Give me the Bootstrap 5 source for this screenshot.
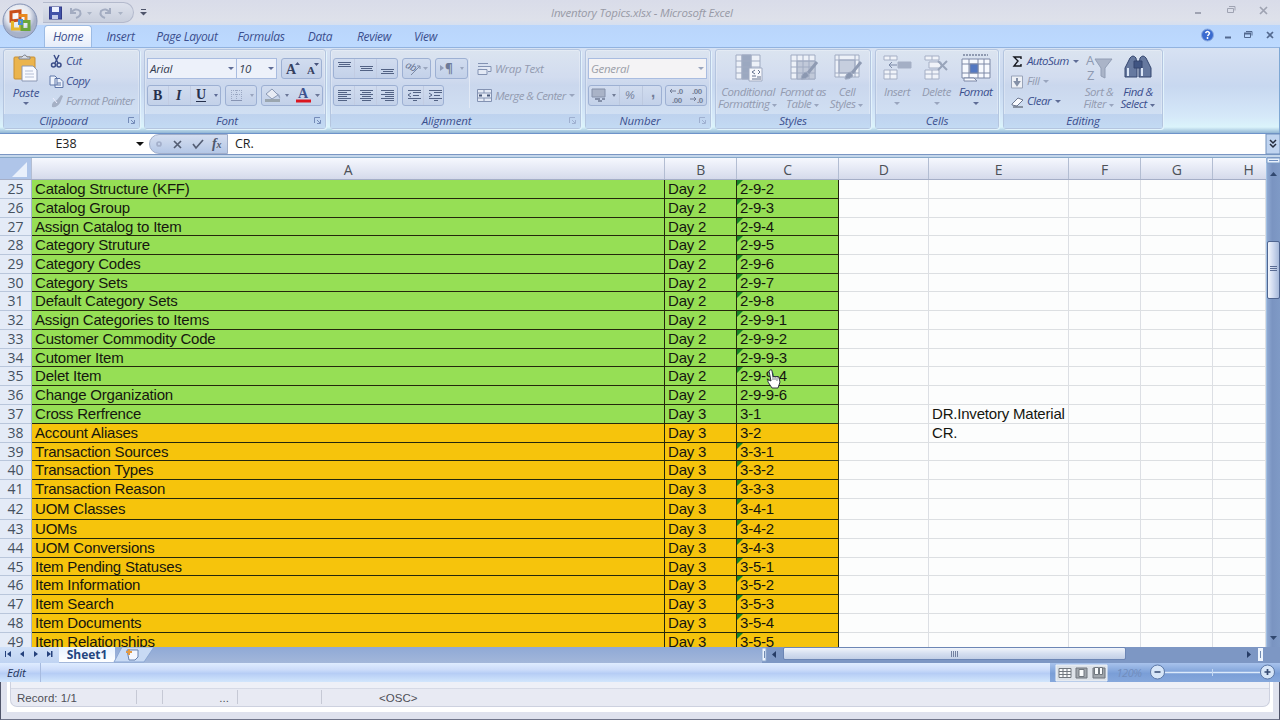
<!DOCTYPE html>
<html lang="en">
<head>
<meta charset="utf-8">
<title>Inventory Topics.xlsx - Microsoft Excel</title>
<link href="https://cdn.jsdelivr.net/npm/bootstrap@5.3.0/dist/css/bootstrap.min.css" rel="stylesheet">
<style>
:root{--ink:#3b4f8e;--dim:#939bb0}
body{width:1280px;height:720px;overflow:hidden;background:#e8eaf3;font-family:"Open Sans","Noto Sans",sans-serif;font-size:11.5px;line-height:12px;color:var(--ink);font-style:italic;letter-spacing:-.45px}
svg{display:block;flex:none;overflow:visible}
span,div{white-space:nowrap}
.dim{color:var(--dim)}
.titlebar{height:25px;background:linear-gradient(#d9dce9,#dee1ea 80%,#d5dff0)}
.qat{width:91px;height:21px;margin-left:43px;margin-top:2px;border:1px solid #b3b9cc;border-left:0;border-radius:0 11px 11px 0;background:linear-gradient(#dde1ec,#c9cfdd)}
.doctitle{width:182px;color:#989aa6;margin-left:403px;letter-spacing:-.2px}
.orb{left:2px;top:3px;z-index:3}
.tabs{height:22px;background:linear-gradient(#b9d5fb,#bddaff)}
.tabs .tab{position:relative;height:22px;line-height:23px;text-align:center;font-size:12px;letter-spacing:-.3px}
.tabs .on{background:linear-gradient(#fff,#e6edfa);border:1px solid #9cbbe4;border-bottom:0;border-radius:4px 4px 0 0;margin-left:44px;width:48px;line-height:22px}
.ribbon{height:86px;padding:1px 0 0 3px;background:linear-gradient(#d7e2f3 0,#d0dcf0 20%,#c8d8f0 45%,#d5e8f9 80%,#dbf4fb 93%,#92b6d4);border-top:1px solid #92b3df;border-right:1px solid #7fa8d4}
.group{flex:none;height:80px;margin-right:4px;border:1px solid #b4c5df;border-radius:3px;background:linear-gradient(#dbe4f0,#d2dcef 35%,#cad7ed 45%,#d1e0f3 85%);box-shadow:inset 0 0 0 1px #ffffff40,1px 1px #e2f3fc}
.gbody{height:64px}
.glabel{height:14px;background:linear-gradient(#bed2ee,#c3daf3);position:relative;text-align:center;line-height:14px;letter-spacing:-.15px}
.launch{position:absolute;right:4px;top:3px}
.bx{height:21px;border:1px solid #9db0d3;border-radius:3px;background:linear-gradient(#d1dcef,#c3d1e9)}
.field{height:21px;border:1px solid #a9bce0;background:#edf1fa;color:#343c4f;padding:0 2px}
.field.off{background:#f4f3f5;color:#9b9ea8}
.cr{display:block;width:0;height:0;border:3px solid transparent;border-top-color:#5e6c96;border-bottom:0;flex:none}
.dim .cr,.cr.dim{border-top-color:#99a5be}
.big{flex:none;text-align:center;height:64px;padding-top:4px}
.big svg{margin:0 auto 5px}
.big svg.d-inline{margin:0}
.clip{gap:2px;height:14px}
.fbar{height:22px;background:#fff;border-top:1px solid #6e93ca;border-bottom:1px solid #7b96c3;font-style:normal;color:#222;letter-spacing:-.1px}
.fbtns{width:79px;height:20px;border-radius:10px 0 0 10px;background:linear-gradient(#d5def0,#b4c7e6);border:1px solid #a1aec9}
.strip{height:2px;background:#c5d7eb}
.sheet{height:490px;width:1266px;overflow:hidden;background:#fcfdfd;font-style:normal;color:#15160f}
.hdr{height:23px;background:linear-gradient(#f6f8fe,#e2e6f3 60%,#d5daeb);border-top:1px solid #87a8c8;border-bottom:1px solid #a5aec7;color:#4c5057;font-size:14px;line-height:23px;text-align:center}
.hdr>div{border-right:1px solid #b3bdd2;height:21px;flex:none}
.line{overflow:hidden}
.rn{flex:none;width:32px;background:#e4ebf7;color:#45515f;font-size:14px;text-align:center;border-right:1px solid #a4b4cf;border-bottom:1px solid #b9c6db;letter-spacing:0}
.c{flex:none;border-right:1px solid #dcdfe4;border-bottom:1px solid #dcdfe2;font:15px "Liberation Sans",Arial,sans-serif;letter-spacing:-.2px;padding-left:3px;position:relative}
.wA{width:633px}.wB{width:72px}.wC{width:102px}.wD{width:90px}.wE{width:140px}.wF{width:72px}.wG{width:72px}.wH{width:53px}
.grn{background:#96df55}.org{background:#f6c40c}
.grn,.org{border-color:#24270c}
.flag::before{content:"";position:absolute;left:0;top:0;border:3px solid transparent;border-top-color:#178426;border-left-color:#178426}
.vscroll{width:14px;height:490px;background:linear-gradient(90deg,#8fa9d2,#7a94c1 40%,#7f9ac6);border-left:1px solid #a3c1e4}
.vthumb{height:58px;margin-top:60px;border:1px solid #4f6590;border-radius:2px;background:linear-gradient(90deg,#f1f5fc,#cdd8ee 50%,#a6b9da)}
.tabrow{height:16px;background:linear-gradient(#8fa9d6,#a3b7da)}
.navs{width:59px;height:16px;background:linear-gradient(#d0e0f8,#bfd3f2)}
.stab{font:bold 12px/15px "Open Sans",sans-serif;color:#24457f;letter-spacing:-.05px;width:56px;background:linear-gradient(#e7f1ff,#fff);height:15px;text-align:center}
.hbar{width:518px;background:#7d97c4}
.hthumb{width:343px;height:13px;background:linear-gradient(#f1f5fb,#d5dff0 50%,#c2cfe6);border:1px solid #6c86b5;border-radius:2px}
.status{height:19px;background:linear-gradient(#dfecff,#ccdcfa 35%,#b6cdf5 55%,#d2e6fc);font-size:11.5px}
.zoomer{width:230px;height:19px;background:linear-gradient(#a8c3ec,#7a9ed7 55%,#86a8dc)}
.under{height:38px;background:#fff;border-left:1px solid #50556a;border-right:1px solid #50556a;padding:0 6px 0 8px;border-bottom:1px solid #70758a;font:11.5px "Liberation Sans",sans-serif;color:#4e4f57;letter-spacing:.05px;box-shadow:inset 0 -7px #dfe2ee,inset 6px 0 #dfe2ee,inset -6px 0 #dfe2ee}
.rec{height:25px;width:1260px;margin-left:1px;background:linear-gradient(#eef0f7 6px,#c4c9d8 6px,#e8eaf3 7px);border:1px solid #cdd1df;border-top:0;border-radius:0 0 7px 7px;padding-top:8px}
.rec>div{height:14px;border-right:1px solid #c6c9d5;line-height:16px}
.hand{left:766px;top:368px;z-index:9}
</style>
</head>
<body class="position-relative">
<div class="titlebar d-flex position-relative">
  <svg class="orb position-absolute" width="36" height="36" viewBox="0 0 36 36"><defs><radialGradient id="og" cx=".45" cy=".35"><stop offset="0" stop-color="#fff"/><stop offset=".7" stop-color="#e4e7ef"/><stop offset="1" stop-color="#a8b2c9"/></radialGradient></defs><circle cx="18" cy="18" r="17" fill="url(#og)" stroke="#8492b4"/><g fill="none" stroke-width="3"><path d="M9 9l9-1v9l-9 1z" stroke="#c9501c"/><path d="M17 12.500h7v6" stroke="#e88a22"/><path d="M10.500 18v8h8v-7" stroke="#e6b730"/><path d="M20 18.500h7v8h-7z" stroke="#6aa63a"/><path d="M17 17h3v4h-3z" stroke="#4d8fd0" stroke-width="2"/></g></svg>
  <div class="qat d-flex align-items-center">
    <svg width="91" height="19" viewBox="0 0 91 19"><rect x="6.500" y="4" width="12" height="12" fill="#4253a8" stroke="#323b87"/><rect x="9" y="4" width="7" height="5" fill="#edf2ff"/><rect x="9" y="12" width="6" height="4" fill="#c5cdea"/><g fill="none" stroke="#a3acc1" stroke-width="2"><path d="M28 5v5h5M28 10q4-6 9-2 2 5-4 7"/><path d="M67 5v5h-5M67 10q-4-6-9-2-2 5 4 7"/></g><path d="M44 9h5l-2.500 3zM75 9h5l-2.500 3z" fill="#aab3c5"/></svg>
  </div>
  <svg class="ms-1 mt-2" width="10" height="8"><path d="M3 1.500h5" stroke="#4f556b"/><path d="M2 4h7L5.500 7.500z" fill="#4f556b"/></svg>
  <div class="doctitle pt-1" style="margin-top:3px">Inventory Topics.xlsx - Microsoft Excel</div>
  <svg class="ms-auto" width="80" height="24" fill="none" stroke="#9fa3b2"><path d="M-5 14h6" stroke-width="2" transform="translate(0 -1)"/><path d="M27.500 8.500h6v4h-6zM29 6.500h6v4" /><path d="M60 7l7 7m0-7l-7 7" stroke-width="1.700"/></svg>
</div>
<div class="tabs d-flex position-relative">
  <div class="tab on">Home</div><div class="tab" style="width:57px">Insert</div><div class="tab" style="width:76px">Page Layout</div><div class="tab" style="width:72px">Formulas</div><div class="tab" style="width:46px">Data</div><div class="tab" style="width:62px">Review</div><div class="tab" style="width:41px">View</div>
  <svg class="ms-auto" width="80" height="22" fill="none" stroke="#53698f"><circle cx="7.500" cy="10" r="6" fill="#3a6bd0" stroke="#8cabe0"/><path d="M5.500 8q2-3 4 0 0 1-2 3M7.500 12v2" stroke="#fff" stroke-width="1.500"/><path d="M25 12.500h6" stroke-width="2"/><path d="M44.500 8.500h6v4h-6zM46 6.500h6v4"/><path d="M44 8.500h7" stroke-width="2"/><path d="M67 7l6 6m0-6l-6 6" stroke-width="1.700"/></svg>
</div>
<div class="ribbon d-flex">
  <div class="group" style="width:137px"><div class="gbody d-flex">
    <div class="big" style="width:44px"><svg width="26" height="28" viewBox="0 0 26 28"><rect x="1" y="3" width="21" height="22" rx="1" fill="#ebb44d" stroke="#c78f35"/><path d="M6 5h11V3h-3q-2-4-5 0H6z" fill="#d9dde4" stroke="#7a8190"/><path d="M9 12h11l4 4v11H9z" fill="#f7f9ff" stroke="#8a97b3"/><path d="M12 17h8m-8 3h9m-9 3h9" stroke="#b5bfd6"/></svg><div style="letter-spacing:-.2px">Paste</div><i class="cr mx-auto" style="margin-top:3px"></i></div>
    <div class="d-flex flex-column" style="padding:4px 0 0 1px;gap:6px">
      <div class="d-flex align-items-center clip"><svg width="15" height="13" fill="none" stroke="#3b4d88" stroke-width="1.500"><path d="M5 0l4 8M10 0L6 8"/><circle cx="4.500" cy="10" r="2"/><circle cx="10" cy="10" r="2"/></svg>Cut</div>
      <div class="d-flex align-items-center clip"><svg width="15" height="13" fill="#edf2fc" stroke="#5f76a8"><path d="M1 1h5l2 2v7H1zM6 3.500h5l3 3v6H6z"/><path d="M8 8h4m-4 2h4"/></svg>Copy</div>
      <div class="d-flex align-items-center clip dim"><svg width="15" height="13"><path d="M3 12q-1-5 5-7l4-5 2 1-3 7q-3 5-8 4z" fill="#a5b0c5"/><path d="M4 3l4 5" stroke="#eef" /></svg><span style="letter-spacing:-.6px">Format Painter</span></div>
    </div></div><div class="glabel pe-3">Clipboard<svg class="launch" width="7" height="7" fill="none" stroke="#748bb8"><path d="M.5 6V.5H6M3 3l3 3M6.500 3v3.500H3"/></svg></div></div>
  <div class="group" style="width:182px"><div class="gbody" style="padding-top:8px"><div class="d-flex" style="padding-left:2px"><div class="field d-flex align-items-center" style="width:90px;letter-spacing:-.2px">Arial<i class="cr ms-auto"></i></div><div class="field d-flex align-items-center" style="width:41px;margin-left:-1px">10<i class="cr ms-auto"></i></div>
    <div class="bx" style="width:41px;margin-left:4px"><svg width="40" height="19"><text x="4" y="15" font-family="Liberation Serif" font-weight="bold" font-size="14" font-style="normal" fill="#35405f">A</text><text x="25" y="15" font-family="Liberation Serif" font-weight="bold" font-size="11" font-style="normal" fill="#35405f">A</text><path d="M13 6h5l-2.500-3zM32 4h5l-2.500 3z" fill="#47547d"/></svg></div></div>
    <div class="d-flex" style="padding:6px 0 0 2px;gap:4px"><div class="bx" style="width:74px"><svg width="72" height="19" font-family="Liberation Serif" font-weight="bold" font-size="14" font-style="normal" fill="#26304c"><text x="5" y="14">B</text><text x="28" y="14" font-style="italic">I</text><text x="48" y="13">U</text><path d="M48 15.500h10" stroke="#26304c"/><path d="M66 8h4l-2 3z" fill="#5e6c96"/><path d="M42.500 0v19M20.500 0v19" stroke="#c2cce2"/></svg></div>
    <div class="bx" style="width:32px"><svg width="30" height="19"><path d="M5 4.500h11M5 8.500h11M5.500 4v10M10.500 4v10M15.500 4v10" stroke="#9ba8c3" stroke-dasharray="1 1"/><path d="M5 14.500h11" stroke="#8794b3"/><path d="M24 8h4l-2 3z" fill="#99a5be"/></svg></div>
    <div class="bx" style="width:62px"><svg width="60" height="19"><path d="M4 8l6-5 6 6-6 4z" fill="#e8ecf4" stroke="#8b99b4"/><path d="M15 7q4 2 3 6l-2-3" fill="#9aaac5"/><path d="M3 14.500h15" stroke="#9ba6af" stroke-width="3"/><path d="M23 8h4l-2 3zM53 8h5l-2.500 3z" fill="#6b7798"/><text x="36" y="12" font-family="Liberation Serif" font-weight="bold" font-size="14" font-style="normal" fill="#3e528e">A</text><path d="M34 15h15" stroke="#db1620" stroke-width="3"/></svg></div></div>
  </div><div class="glabel pe-3">Font<svg class="launch" width="7" height="7" fill="none" stroke="#748bb8"><path d="M.5 6V.5H6M3 3l3 3M6.500 3v3.500H3"/></svg></div></div>
  <div class="group" style="width:251px"><div class="gbody d-flex" style="padding:8px 0 0 2px">
    <div style="width:137px;height:50px;border-right:1px solid #e2e9f5"><div class="d-flex gap-1"><div class="bx" style="width:65px"><svg width="63" height="19" stroke="#526284"><path d="M4 3.500h13M5 5.500h11M4 7.500h13M26 7.500h13M27 9.500h11M26 11.500h13M47 10.500h13M49 12.500h10M47 14.500h13"/><path d="M20.500 0v19M42.500 0v19" stroke="#c2cce2"/></svg></div><div class="bx" style="width:29px"><svg width="27" height="19"><text x="2" y="11" font-size="10" fill="#65728f" transform="rotate(25 8 9)">ab</text><path d="M8 16L17 7m-3 0h3v3" stroke="#7e8ba6" fill="none"/><path d="M20 8h5l-2.500 3z" fill="#9ba7bf"/></svg></div><div class="bx" style="width:33px"><svg width="31" height="19"><path d="M4 6l4 3-4 3z" fill="#8f9cb9"/><text x="9" y="14" font-size="12" font-style="normal" font-weight="bold" fill="#6d7a98">¶</text><path d="M24 8h4l-2 3z" fill="#9ba7bf"/></svg></div></div>
    <div class="d-flex gap-1" style="padding-top:6px"><div class="bx" style="width:65px"><svg width="63" height="19" stroke="#526284"><path d="M4 4.500h13M4 6.500h9M4 8.500h13M4 10.500h9M4 12.500h13M4 14.500h9M26 4.500h13M28 6.500h9M26 8.500h13M28 10.500h9M26 12.500h13M28 14.500h9M47 4.500h13M51 6.500h9M47 8.500h13M51 10.500h9M47 12.500h13M51 14.500h9"/><path d="M20.500 0v19M42.500 0v19" stroke="#c2cce2"/></svg></div><div class="bx" style="width:42px"><svg width="40" height="19" stroke="#526284" fill="none"><path d="M5 4.500h13M10 6.500h8M10 9.500h6M5 12.500h13M10 14.500h4M8 7l-3 2 3 2M26 4.500h13M31 6.500h8M31 9.500h6M26 12.500h13M31 14.500h4M26 7l3 2-3 2"/><path d="M20.500 0v19" stroke="#c2cce2"/></svg></div></div></div>
    <div class="dim" style="padding-left:7px"><div class="d-flex align-items-center" style="height:21px;gap:3px;letter-spacing:-.3px"><svg width="15" height="15" fill="#e3e9f5" stroke="#8392b2"><path d="M1 2.500h10M1 5.500h13v5h-3M1 8.500h9v5H1z"/></svg>Wrap Text</div><div class="d-flex align-items-center" style="height:21px;margin-top:6px;gap:3px"><svg width="15" height="15" fill="#e3e9f5" stroke="#8392b2"><path d="M.5 1.500h14v12H.5zM0 5h15M0 10h15M7 1v4M7 10v4"/><path d="M2 7.500h3m5 0h3" stroke="#455577" stroke-width="2"/></svg><span style="letter-spacing:-.55px">Merge &amp; Center</span><i class="cr"></i></div></div>
    </div><div class="glabel" style="padding-right:18px">Alignment<svg class="launch" width="7" height="7" fill="none" stroke="#9fb0d0"><path d="M.5 6V.5H6M3 3l3 3M6.500 3v3.500H3"/></svg></div></div>
  <div class="group" style="width:126px"><div class="gbody" style="padding:8px 2px"><div class="field off d-flex align-items-center" style="width:119px;letter-spacing:-.3px">General<i class="cr dim ms-auto"></i></div><div class="d-flex" style="padding-top:6px;gap:3px"><div class="bx" style="width:74px"><svg width="72" height="19" font-family="Liberation Sans" font-style="normal" fill="#727d96"><path d="M3 3h13v8H3z" fill="#a9b3c7" stroke="#8490a9"/><path d="M6 13h5m2 0h3M9 15h4" stroke="#8490a9" stroke-width="2"/><path d="M23 8h4l-2 3z"/><text x="36" y="13" font-size="11" font-style="italic">%</text><text x="62" y="11" font-size="15" font-weight="bold">,</text><path d="M30.500 0v19M53.500 0v19" stroke="#bdc9df"/></svg></div><div class="bx" style="width:42px"><svg width="40" height="19" font-family="Liberation Sans" font-style="normal" font-weight="bold" font-size="8" fill="#727d96"><text x="11" y="8">.0</text><text x="6" y="17">.00</text><text x="26" y="8">.00</text><text x="31" y="17">.0</text><path d="M4 5h6M4 5l2-2m-2 2l2 2M24 13h6m-2-2l2 2-2 2" stroke="#727d96" fill="none"/></svg></div></div></div><div class="glabel" style="padding-right:16px">Number<svg class="launch" width="7" height="7" fill="none" stroke="#9fb0d0"><path d="M.5 6V.5H6M3 3l3 3M6.500 3v3.500H3"/></svg></div></div>
  <div class="group" style="width:156px"><div class="gbody d-flex dim">
    <div class="big" style="width:64px"><svg width="27" height="27" fill="#edf1f8" stroke="#a0abc2"><path d="M1 1h24v24H1z"/><path d="M7 1h9v24H7z" fill="#9ba8c0"/><path d="M1 7h24M1 13h24M1 19h24M7 1v24M16 1v24"/><path d="M14 14h13v13H14z" fill="#f7f8fc"/><path d="M20 16l-3 2 3 2m-3 2h4m2-6l2 2-2 2m-1 3h4m-9 2h9" stroke="#63718d" fill="none"/></svg><div>Conditional</div><div>Formatting <svg class="d-inline" width="6" height="7"><path d="M0 3h5l-2.500 3z" fill="#99a5be"/></svg></div></div>
    <div class="big" style="width:46px"><svg width="27" height="27" fill="#edf1f8" stroke="#a0abc2"><path d="M1 1h24v24H1z"/><path d="M7 7h18v18H7z" fill="#c1c9d9"/><path d="M1 7h24M1 13h24M1 19h24M7 1v24M13 1v24M19 1v24"/><path d="M27 8l-9 11" stroke="#8f9bb3" stroke-width="3"/><path d="M11 25q4 1 8-3l-2-4q-5 0-6 7z" fill="#8b98b1"/></svg><div style="letter-spacing:-.6px">Format as</div><div>Table <svg class="d-inline" width="6" height="7"><path d="M0 3h5l-2.500 3z" fill="#99a5be"/></svg></div></div>
    <div class="big" style="width:42px"><svg width="27" height="27" fill="#edf1f8" stroke="#a0abc2"><path d="M1 1h24v22H1z"/><path d="M5 6h16v13H5z" fill="#c6cede"/><path d="M1 6h24M1 19h24M5 1v22M21 1v22"/><path d="M27 8l-9 11" stroke="#8f9bb3" stroke-width="3"/><path d="M11 25q4 1 8-3l-2-4q-5 0-6 7z" fill="#8b98b1"/></svg><div>Cell</div><div>Styles <svg class="d-inline" width="6" height="7"><path d="M0 3h5l-2.500 3z" fill="#99a5be"/></svg></div></div>
  </div><div class="glabel">Styles</div></div>
  <div class="group" style="width:124px"><div class="gbody d-flex">
    <div class="big dim" style="width:42px"><svg width="28" height="27" fill="#f0f3f9" stroke="#a5afc5"><path d="M1 2h13v4H1zM1 16h13v9H1zM7 2v4M7 16v9M1 20h13"/><path d="M15 8h13v6H15z" fill="#a4afc5"/><path d="M6 11h8M9 8l-3 3 3 3" stroke="#7a88a6" fill="none"/></svg><div>Insert</div><i class="cr mx-auto mt-1"></i></div>
    <div class="big dim" style="width:37px"><svg width="25" height="27" fill="#f0f3f9" stroke="#a5afc5"><path d="M1 2h14v4H1zM1 16h14v9H1zM8 2v4M8 16v9M1 20h14M5 8h12v6H5z"/><path d="M14 7l9 9m0-9l-9 9" stroke="#98a4ba" stroke-width="2"/></svg><div>Delete</div><i class="cr mx-auto mt-1"></i></div>
    <div class="big" style="width:41px"><svg width="30" height="27" fill="#f7f9fe" stroke="#7c88a6"><path d="M2 1h25" stroke="#475372" stroke-dasharray="2 1"/><path d="M1 5h28v19H1zM1 10h28M1 19h28M8 5v19M17 5v19M23 5v19"/><path d="M9 10h8v9H9z" fill="#5378c2"/><path d="M3 24h10l3 3h-13z"/></svg><div style="letter-spacing:-.6px">Format</div><i class="cr mx-auto mt-1"></i></div>
  </div><div class="glabel">Cells</div></div>
  <div class="group" style="width:160px"><div class="gbody d-flex">
    <div class="d-flex flex-column flex-shrink-0" style="padding:4px 0 0 7px;gap:6px;width:75px"><div class="d-flex align-items-center" style="height:14px;gap:4px"><svg width="12" height="13"><path d="M10 4V2H3l4 4-4 5h7V9" fill="none" stroke="#15171e" stroke-width="1.400"/></svg><span style="letter-spacing:-.6px">AutoSum</span><i class="cr"></i></div><div class="d-flex align-items-center dim gap-1" style="height:14px"><svg width="12" height="13"><path d="M.5 1h11v12H.5z" fill="#edf0f6" stroke="#98a3b8"/><path d="M6 3v5M4 7l2 3 2-3z" fill="#8490a7" stroke="#8490a7" stroke-width="2"/></svg>Fill<i class="cr"></i></div><div class="d-flex align-items-center gap-1" style="height:14px"><svg width="12" height="13"><path d="M1 9l6-6 5 2-6 6-5-1z" fill="#fafbff" stroke="#6d7890"/><path d="M2 12h10" stroke="#404654"/></svg>Clear<i class="cr"></i></div></div>
    <div class="big dim" style="width:40px"><svg width="28" height="27"><path d="M10 5h17l-7 9v10l-4-2v-8z" fill="#aab4c8" stroke="#929eb5"/><text x="1" y="11" font-size="13" font-style="normal" fill="#8e99b0">A</text><text x="2" y="26" font-size="13" font-style="normal" fill="#8e99b0">Z</text></svg><div>Sort &amp;</div><div>Filter <svg class="d-inline" width="6" height="7"><path d="M0 3h5l-2.500 3z" fill="#99a5be"/></svg></div></div>
    <div class="big" style="width:38px"><svg width="28" height="27" fill="#66799f" stroke="#34466f"><path d="M6 4q3-4 6 0l1 7v12H1V14zM16 4q3-4 6 0l5 10v9H15V11z"/><path d="M10 7h8v7h-8z" fill="#405582"/><path d="M4 14v8m14-8v8" stroke="#dce7f7" stroke-width="2"/></svg><div>Find &amp;</div><div>Select <svg class="d-inline" width="6" height="7"><path d="M0 3h5l-2.500 3z" fill="#5e6c96"/></svg></div></div>
  </div><div class="glabel">Editing</div></div>
</div>
<div class="fbar d-flex align-items-center"><div style="width:132px;text-align:center;font-size:12.500px">E38</div><i class="cr" style="border-width:4px 4px 0;border-top-color:#111;margin-left:4px"></i><div style="width:5px"></div>
  <div class="fbtns"><svg width="78" height="18" fill="none" stroke="#545e74" stroke-width="1.700"><circle cx="9" cy="9" r="2" stroke="#a3afca"/><path d="M24 6l7 7m0-7l-7 7M43 9l3 4 7-8"/><text x="62" y="13" font-family="Liberation Serif" font-style="italic" font-weight="bold" font-size="14" fill="#4e586d" stroke="none">f<tspan font-size="10">x</tspan></text></svg></div><div style="padding-left:7px;font-size:12.500px">CR.</div>
  <svg class="ms-auto" width="14" height="20" fill="none" stroke="#232a3c" stroke-width="1.500"><path d="M0 0h14v20H0z" fill="#c0d4f0" stroke="#7191bd" stroke-width="1"/><path d="M4 6l3 3 3-3M4 10l3 3 3-3"/></svg></div>
<div class="strip"></div>
<div class="d-flex">
 <div class="sheet" id="sheet"><div class="hdr d-flex"><div style="width:32px;background:#afc5e9"><svg width="31" height="21"><path d="M27 4v15H12z" fill="#e9f0fb"/></svg></div><div class="wA">A</div><div class="wB">B</div><div class="wC">C</div><div class="wD">D</div><div class="wE">E</div><div class="wF">F</div><div class="wG">G</div><div style="width:72px">H</div></div></div>
 <div class="vscroll"><svg width="13" height="24"><path d="M0 1h13v5H0z" fill="#e8f1fc" stroke="#7d9cc6"/><path d="M2 3.500h9" stroke="#6f8fc0"/><path d="M3 19h7l-3.500-4z" fill="#31486f"/></svg><div class="vthumb"><svg width="11" height="56"><path d="M2 24.500h7M2 26.500h7M2 28.500h7" stroke="#5a6c93"/></svg></div><svg width="13" height="340"><path d="M3 337h7l-3.500 4z" fill="#31486f"/></svg></div>
</div>
<div class="tabrow d-flex">
  <div class="navs"><svg width="59" height="15" fill="#26427c"><path d="M11 4v6L7 7zM5 4h1v6H5zM24 4v6l-4-3zM34 4v6l4-3zM47 4v6l4-3zM51 4h1.500v6H51z"/></svg></div><div class="stab">Sheet1</div>
  <svg width="40" height="15"><path d="M-1 15L7 0h32L29 15z" fill="#c8daf4" stroke="#8ba7d4"/><path d="M12 3h11v7l-3 3h-6z" fill="#f4f7ff" stroke="#6680ae"/><path d="M14 2v6M11 5h6" stroke="#e39a43" stroke-width="2"/></svg>
  <div class="hbar d-flex ms-auto"><svg width="21" height="15"><path d="M0 1h4v13H0z" fill="#edf4fd" stroke="#8faad0"/><path d="M2.500 4v7" stroke="#718bb3"/><path d="M14 4v7l-4-3.500z" fill="#263c66"/></svg><div class="hthumb"><svg width="341" height="11"><path d="M167.500 3v6m2-6v6m2-6v6m2-6v6" stroke="#7381a0"/></svg></div><svg width="154" height="15"><path d="M121 4v7l4-3.500z" fill="#263c66"/><path d="M132 1h5v13h-5z" fill="#edf4fd"/><path d="M134.500 4v7" stroke="#718bb3"/></svg></div>
</div>
<div class="status d-flex align-items-center"><div style="width:41px;height:19px;line-height:19px;padding-left:7px;border-right:1px solid #a7bbe0;color:#26375f;letter-spacing:-.2px">Edit</div>
  <div class="zoomer ms-auto d-flex align-items-center"><svg width="44" height="16" style="margin-left:6px" fill="#f8fafb" stroke="#70777e"><path d="M0 0h51v16H0z" fill="#dde2e8" stroke="#edf3fa"/><path d="M3 3.500h12v9H3zM7 3v9M11 3v9M3 6.500h12M3 9.500h12"/><path d="M20 3h11v10H20z" fill="#a0a6ac"/><path d="M23 4.500h5v7h-5z"/><path d="M37 3h12v10H37z" fill="#a0a6ac"/><path d="M38.500 2.500h4v7h-4zM43.500 2.500h3v7h-3z"/></svg><span style="width:46px;padding-left:12px;text-align:center;color:#718dbd;font-size:11px">120%</span>
  <svg width="134" height="19"><path d="M18 9.500h96" stroke="#dce9fa" stroke-width="1.500"/><path d="M66.500 6v7" stroke="#c4d8f2"/><g fill="#d7e6f8" stroke="#5c78a7"><circle cx="11.500" cy="9" r="7"/><circle cx="121.500" cy="9" r="7"/></g><path d="M8.500 9h6m104 0h6m-3-3v6" stroke="#344970" stroke-width="1.700"/></svg></div></div>
<div class="under"><div class="rec d-flex"><div style="width:126px;padding-left:6px">Record: 1/1</div><div style="width:26px"></div><div style="width:75px;text-align:right;padding-right:8px">...</div><div style="width:84px"></div><div style="width:57px;border:0"></div><div style="border:0">&lt;OSC&gt;</div></div></div>
<svg class="hand position-absolute" width="16" height="22" viewBox="0 0 16 22"><path d="M4 2q2-1 2 1l1 6q1-2 2 0 1-1 2 0 2-1 2 1l1 4-2 6H6l-4-6q-1-2 1-2l2 1L3 3z" fill="#fff" stroke="#333943"/><path d="M7 9v3m2-3v3m2-2v3" stroke="#7d8289"/></svg>
<script>
const topics=["Catalog Structure (KFF)","Catalog Group","Assign Catalog to Item","Category Struture","Category Codes","Category Sets","Default Category Sets","Assign Categories to Items","Customer Commodity Code","Cutomer Item","Delet Item","Change Organization","Cross Rerfrence","Account Aliases","Transaction Sources","Transaction Types","Transaction Reason","UOM Classes","UOMs","UOM Conversions","Item Pending Statuses","Item Information","Item Search","Item Documents","Item Relationships"];
const codes=["2-9-2","2-9-3","2-9-4","2-9-5","2-9-6","2-9-7","2-9-8","2-9-9-1","2-9-9-2","2-9-9-3","2-9-9-4","2-9-9-6","3-1","3-2","3-3-1","3-3-2","3-3-3","3-4-1","3-4-2","3-4-3","3-5-1","3-5-2","3-5-3","3-5-4","3-5-5"];
const ends=[199,218,236,255,274,292,311,330,349,367,386,405,424,443,461,480,499,520,539,558,576,595,614,633,652];
let rowTop=180;
const notes={12:"DR.Invetory Material",13:"CR."};
document.getElementById('sheet').insertAdjacentHTML('beforeend',topics.map((t,i)=>{
  const h=ends[i]-rowTop; rowTop=ends[i];
  const k=i<13?'grn':'org', f=/-.*-/.test(codes[i])&&i!==11?' flag':'';
  return `<div class="line d-flex" style="height:${h}px;line-height:${h-1}px"><div class="rn">${25+i}</div><div class="c wA ${k}" style="line-height:${h-1}px">${t}</div><div class="c wB ${k}" style="line-height:${h-1}px">Day ${i<12?2:3}</div><div class="c wC ${k}${f}" style="line-height:${h-1}px">${codes[i]}</div><div class="c wD"></div><div class="c wE" style="line-height:${h-1}px">${notes[i]||''}</div><div class="c wF"></div><div class="c wG"></div><div class="c wH"></div></div>`;
}).join(''));
</script>
<script src="https://cdn.jsdelivr.net/npm/bootstrap@5.3.0/dist/js/bootstrap.bundle.min.js"></script>
</body>
</html>
